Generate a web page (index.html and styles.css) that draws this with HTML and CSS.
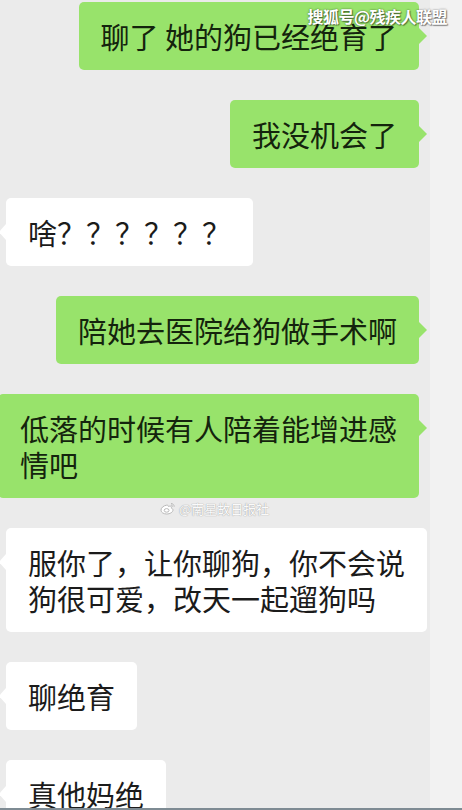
FILE: index.html
```html
<!DOCTYPE html>
<html lang="zh-CN">
<head>
    <meta charset="UTF-8">
    <meta name="viewport" content="width=device-width, initial-scale=1.0">
    <title>聊天记录</title>
    <link rel="stylesheet" href="styles.css">
</head>
<body>

<div class="screen">
    <div class="chat">
        <div class="bubble mine">聊了 她的狗已经绝育了</div>
        <div class="bubble mine">我没机会了</div>
        <div class="bubble theirs">啥？？？？？？</div>
        <div class="bubble mine">陪她去医院给狗做手术啊</div>
        <div class="bubble mine">低落的时候有人陪着能增进感情吧</div>
        <div class="bubble theirs">服你了，让你聊狗，你不会说狗很可爱，改天一起遛狗吗</div>
        <div class="bubble theirs">聊绝育</div>
        <div class="bubble theirs">真他妈绝</div>

        <!-- weibo watermark -->
        <div class="weibo-mark">
            <svg width="16" height="13" viewBox="0 0 16 13">
                <path d="M6.5 3.2C3.6 3.6 1 5.8 1 8.2c0 2.2 2.6 3.8 5.6 3.8 3.6 0 6.4-2 6.4-4 0-1.2-1.1-1.7-1.8-1.9.4-.8.3-1.6-.5-1.9-.9-.3-2.3.3-2.3.3s.3-1.6-1.9-1.3z" fill="#fff" stroke="#b9b9b9" stroke-width="1"/>
                <ellipse cx="6.6" cy="8.4" rx="2.4" ry="1.8" fill="none" stroke="#b9b9b9" stroke-width="1"/>
                <path d="M11 1.5c1.8 0 3.2 1.4 3.2 3.2M11 3c.9 0 1.6.7 1.6 1.6" fill="none" stroke="#b9b9b9" stroke-width="1"/>
            </svg>
            <span>@南星故日报社</span>
        </div>
    </div>
    <div class="side"></div>

    <div class="sohu-mark">搜狐号@残疾人联盟</div>
</div>
<div class="input-line"></div>

</body>
</html>
```

FILE: styles.css
```css
html, body {
    margin: 0;
    padding: 0;
}
body {
    width: 462px;
    height: 810px;
    overflow: hidden;
    background: #ebebeb;
    font-family: "Noto Sans CJK SC", "Noto Sans", sans-serif;
}
.screen {
    position: relative;
    display: flex;
    height: 808px;
}
.chat {
    position: relative;
    width: 430px;
    box-sizing: border-box;
    padding: 2px 11px 0 6px;
    display: flex;
    flex-direction: column;
    gap: 30px;
    overflow: hidden;
    background: #ebebeb;
}
.side {
    flex: 1;
    background: #f2f2f2;
}
.input-line {
    height: 2px;
    background: #7e8b93;
}

.bubble {
    position: relative;
    flex-shrink: 0;
    width: max-content;
    max-width: 421px;
    box-sizing: border-box;
    padding: 16px 22px;
    border-radius: 5px;
    font-size: 29px;
    line-height: 36px;
}
.bubble::after {
    content: "";
    position: absolute;
    top: 26px;
    border-top: 8px solid transparent;
    border-bottom: 8px solid transparent;
}
.mine {
    align-self: flex-end;
    background: #98e36b;
    color: #14240d;
}
.mine::after {
    right: -8px;
    border-left: 8px solid #98e36b;
}
.theirs {
    align-self: flex-start;
    background: #ffffff;
    color: #1b1b1b;
}
.theirs::after {
    left: -7px;
    border-right: 7px solid #ffffff;
}

/* watermarks */
.sohu-mark {
    position: absolute;
    top: 4px;
    right: 15px;
    color: #fff;
    font-size: 16px;
    font-weight: bold;
    letter-spacing: -0.5px;
    text-shadow: 0 0 2px rgba(0, 0, 0, 0.55), 1px 1px 1px rgba(0, 0, 0, 0.4);
}
.weibo-mark {
    position: absolute;
    top: 499px;
    left: 160px;
    display: flex;
    align-items: center;
    gap: 3px;
    color: #fafafa;
    font-size: 13px;
    text-shadow: 0 0 1px #a8a8a8, 0 0 1px #a8a8a8;
}
```
